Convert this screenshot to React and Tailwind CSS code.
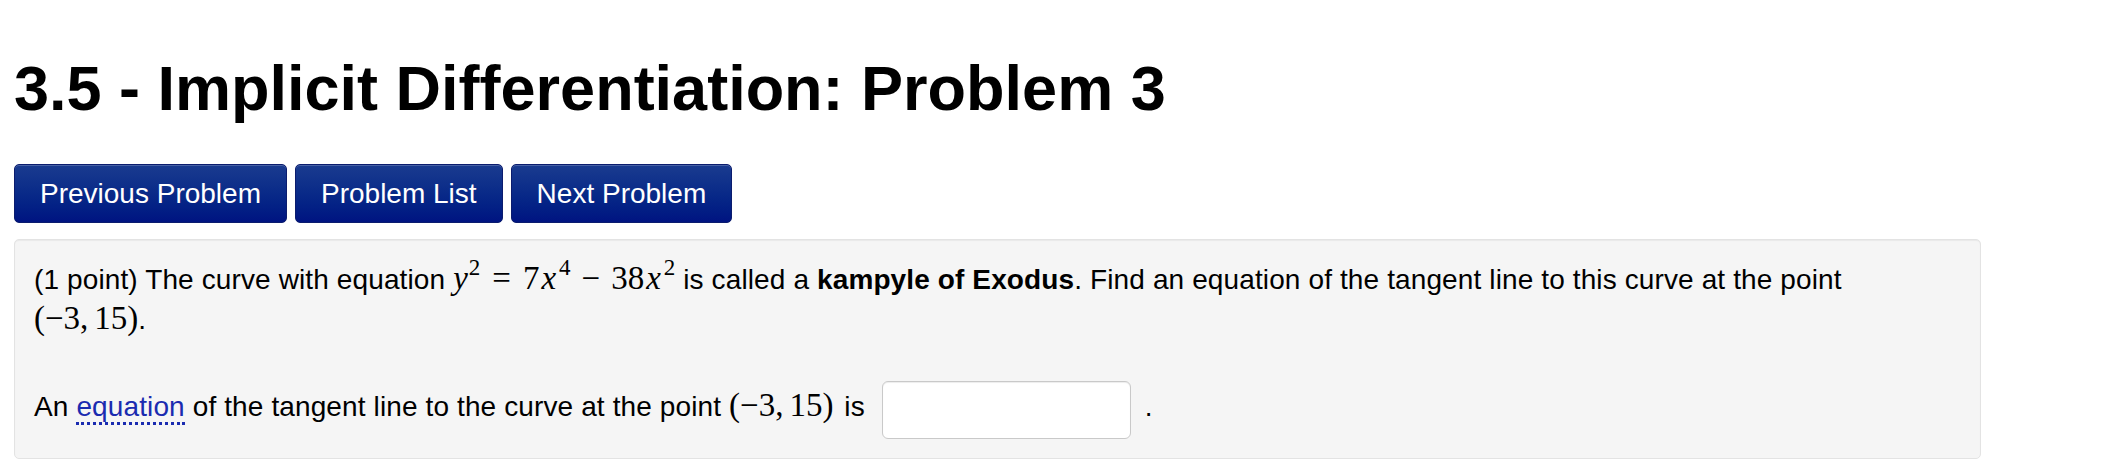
export default function App() {
  const sans = { fontFamily: '"Liberation Sans", Arial, Helvetica, sans-serif' };

  return (
    <div className="bg-white px-[14px] pt-[53px] text-black" style={sans}>
      <h1 className="mb-[41px] text-[63px] font-bold leading-[70px] whitespace-nowrap">
        3.5 - Implicit Differentiation: Problem 3
      </h1>

      <div className="flex gap-[8px]">
        <NavButton label="Previous Problem" />
        <NavButton label="Problem List" />
        <NavButton label="Next Problem" />
      </div>

      <div className="mt-[16px] w-[1967px] rounded-[5px] border border-[#e3e3e3] bg-[#f5f5f5] p-[19px] shadow-[inset_0_1px_1px_rgba(0,0,0,0.05)]">
        <div className="pt-[1px] text-[28px] leading-[40px] tracking-[0.12px] whitespace-nowrap">
          (1 point) The curve with equation <Equation /> is called a{" "}
          <b>kampyle of Exodus</b>. Find an equation of the tangent line to this
          curve at the point
          <br />
          <Point />.
        </div>

        <div className="mt-[41px] flex items-end text-[28px] tracking-[0.12px] whitespace-nowrap">
          <span className="mb-[12px] leading-[40px]">
            An{" "}
            <span className="border-b-[3px] border-dotted border-[#1a2bb0] text-[#1a2bb0]">
              equation
            </span>{" "}
            of the tangent line to the curve at the point <Point />{" "}
            <span className="ml-[3px]">is</span>
          </span>
          <input
            type="text"
            className="ml-[17px] h-[58px] w-[249px] rounded-[6px] border border-[#c9c9c9] bg-white px-3 text-[28px] shadow-[inset_0_1px_1px_rgba(0,0,0,0.075)] outline-none"
          />
          <span className="mb-[12px] ml-[14px] leading-[40px]">.</span>
        </div>
      </div>
    </div>
  );
}

function NavButton({ label }) {
  return (
    <button
      type="button"
      className="flex h-[59px] items-center rounded-[5px] border border-[#0b1c6e] bg-gradient-to-b from-[#1a3b8f] to-[#001381] px-[25px] text-[28px] leading-[40px] text-white shadow-[inset_0_1px_0_rgba(255,255,255,0.2)]"
    >
      {label}
    </button>
  );
}

const serif = { fontFamily: '"Liberation Serif", "Times New Roman", serif' };

function Sup({ children }) {
  return (
    <span className="ml-[1px] align-[14px] text-[23px] leading-[0]">{children}</span>
  );
}

function Equation() {
  return (
    <span className="text-[33px] leading-[0] tracking-normal" style={serif}>
      <i>y</i>
      <Sup>2</Sup>
      <span className="mx-[12px]">=</span>
      7<i className="px-[2px]">x</i>
      <Sup>4</Sup>
      <span className="mx-[11px]">−</span>
      38<i className="px-[2px]">x</i>
      <Sup>2</Sup>
    </span>
  );
}

function Point() {
  return (
    <span className="text-[33px] leading-[0] tracking-normal" style={serif}>
      (−3,<span className="ml-[6px]">15)</span>
    </span>
  );
}
